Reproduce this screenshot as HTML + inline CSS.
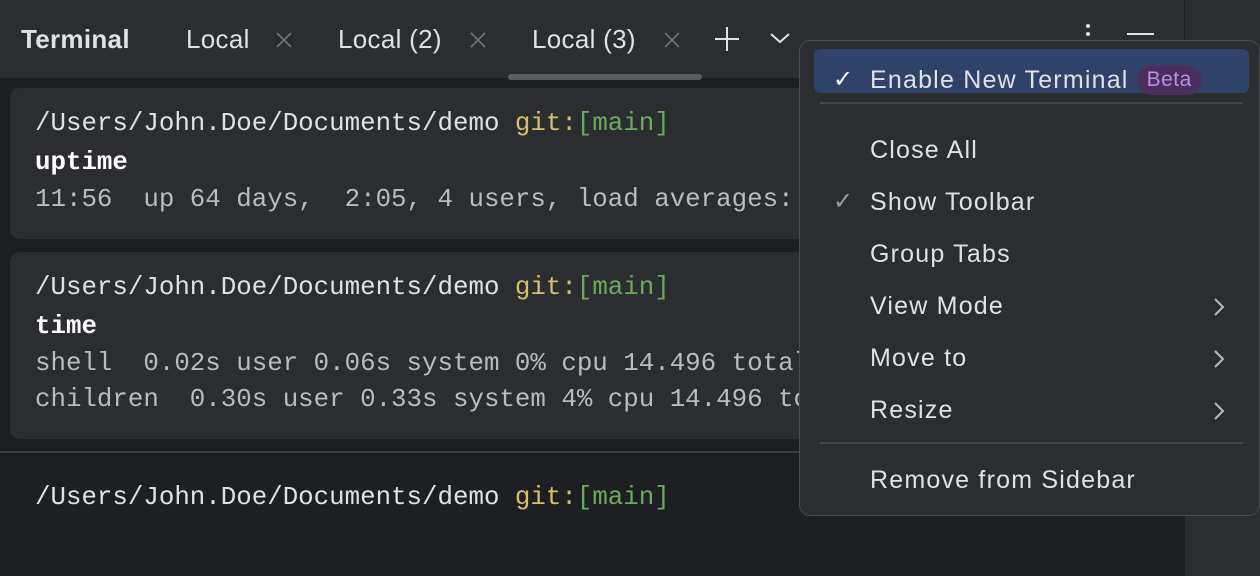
<!DOCTYPE html>
<html><head><meta charset="utf-8"><style>
*{margin:0;padding:0;box-sizing:border-box}
body{width:1260px;height:576px;overflow:hidden;background:#1e1f22;position:relative;font-family:"Liberation Sans",sans-serif}
.hdr{position:absolute;left:0;top:0;width:1184px;height:78px;background:#2b2d30}
.side{position:absolute;left:1184px;top:0;width:76px;height:576px;background:#2b2d30;border-left:1px solid #1e1f22}
.t{position:absolute;top:24px;font-size:26px;color:#dfe1e5;line-height:30px;letter-spacing:0.3px}
.ul{position:absolute;left:508px;top:74px;width:194px;height:6px;border-radius:3px;background:#5a5d63}
.blk{position:absolute;left:10px;width:1180px;background:#2b2d30;border-radius:10px}
.m{position:absolute;left:35px;font-family:"Liberation Mono",monospace;font-size:25.8px;color:#dfe1e5;line-height:36px;white-space:pre}
.y{color:#d6bf6a}.g{color:#6aab5c}.o{color:#b8bbc1}.b{font-weight:bold;color:#fff}
.div{position:absolute;left:0;top:451px;width:1184px;height:2px;background:#393b40}
.menu{position:absolute;left:799px;top:40px;width:461px;height:476px;background:#2b2d30;border:1px solid #474a50;border-radius:11px}
.sel{position:absolute;left:14px;top:8px;width:435px;height:44px;background:#2e426a;border-radius:6px}
.it{position:absolute;left:70px;font-size:25px;color:#dfe1e5;line-height:30px;letter-spacing:1.2px}
.ck{position:absolute;left:33px;font-size:24px;line-height:30px}
.sep{position:absolute;left:20px;width:423px;height:2px;background:#43454a}
.ar{position:absolute;left:412px}
.beta{display:inline-block;margin-left:8px;padding:0 10px;height:30px;border-radius:15px;background:#4a2f5e;color:#b98fe0;font-size:21px;line-height:30px;vertical-align:top;letter-spacing:0.5px}
</style></head><body>
<div class="hdr"></div>
<div class="side"></div>
<div class="t" style="left:21px;font-weight:bold">Terminal</div>
<div class="t" style="left:186px">Local</div>
<div class="t" style="left:338px">Local (2)</div>
<div class="t" style="left:532px">Local (3)</div>
<svg style="position:absolute;left:276px;top:32px" width="16" height="16"><path d="M1 1L15 15M15 1L1 15" stroke="#6f737a" stroke-width="1.6"/></svg>
<svg style="position:absolute;left:470px;top:32px" width="16" height="16"><path d="M1 1L15 15M15 1L1 15" stroke="#6f737a" stroke-width="1.6"/></svg>
<svg style="position:absolute;left:664px;top:32px" width="16" height="16"><path d="M1 1L15 15M15 1L1 15" stroke="#6f737a" stroke-width="1.6"/></svg>
<svg style="position:absolute;left:712px;top:25px" width="30" height="28"><path d="M15 2V26M3 14H27" stroke="#dfe1e5" stroke-width="2"/></svg>
<svg style="position:absolute;left:768px;top:30px" width="24" height="16"><path d="M3 4L12 12L21 4" stroke="#dfe1e5" stroke-width="2" fill="none"/></svg>
<svg style="position:absolute;left:1080px;top:22px" width="16" height="20"><circle cx="8" cy="4" r="2" fill="#dfe1e5"/><circle cx="8" cy="12" r="2" fill="#dfe1e5"/></svg>
<div style="position:absolute;left:1127px;top:33px;width:27px;height:2px;background:#dfe1e5"></div>
<div class="ul"></div>
<div class="blk" style="top:88px;height:151px"></div>
<div class="blk" style="top:252px;height:187px"></div>
<div class="m" style="top:106px">/Users/John.Doe/Documents/demo <span class="y">git:</span><span class="g">[main]</span></div>
<div class="m b" style="top:145px">uptime</div>
<div class="m o" style="top:182px">11:56  up 64 days,  2:05, 4 users, load averages: 1.</div>
<div class="m" style="top:270px">/Users/John.Doe/Documents/demo <span class="y">git:</span><span class="g">[main]</span></div>
<div class="m b" style="top:309px">time</div>
<div class="m o" style="top:346px">shell  0.02s user 0.06s system 0% cpu 14.496 total</div>
<div class="m o" style="top:382px">children  0.30s user 0.33s system 4% cpu 14.496 total</div>
<div class="div"></div>
<div class="m" style="top:480px">/Users/John.Doe/Documents/demo <span class="y">git:</span><span class="g">[main]</span></div>
<div class="menu">
<div class="sel"></div>
<div class="ck" style="top:24px;color:#fff">✓</div>
<div class="it" style="top:24px">Enable New Terminal<span class="beta">Beta</span></div>
<div class="sep" style="top:61px"></div>
<div class="it" style="top:94px">Close All</div>
<div class="ck" style="top:146px;color:#9a9ca2">✓</div>
<div class="it" style="top:146px">Show Toolbar</div>
<div class="it" style="top:198px">Group Tabs</div>
<div class="it" style="top:250px">View Mode</div>
<svg class="ar" style="top:255px" width="14" height="22"><path d="M3 3L11 11L3 19" stroke="#b8bbc1" stroke-width="2" fill="none"/></svg>
<div class="it" style="top:302px">Move to</div>
<svg class="ar" style="top:307px" width="14" height="22"><path d="M3 3L11 11L3 19" stroke="#b8bbc1" stroke-width="2" fill="none"/></svg>
<div class="it" style="top:354px">Resize</div>
<svg class="ar" style="top:359px" width="14" height="22"><path d="M3 3L11 11L3 19" stroke="#b8bbc1" stroke-width="2" fill="none"/></svg>
<div class="sep" style="top:401px"></div>
<div class="it" style="top:424px">Remove from Sidebar</div>
</div>
</body></html>
